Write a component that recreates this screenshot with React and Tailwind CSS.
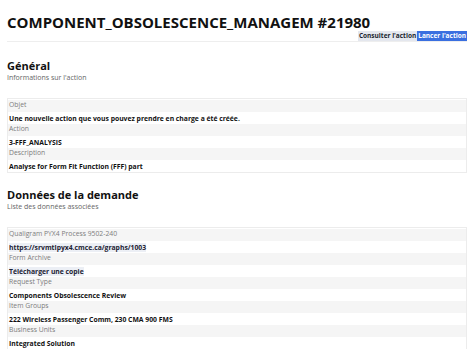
import React from 'react';

const general = [
  { label: 'Objet', value: 'Une nouvelle action que vous pouvez prendre en charge a été créée.' },
  { label: 'Action', value: '3-FFF_ANALYSIS' },
  { label: 'Description', value: 'Analyse for Form Fit Function (FFF) part' },
];

const requestData = [
  { label: 'Qualigram PYX4 Process 9502-240', value: 'https://srvmtlpyx4.cmce.ca/graphs/1003', link: true },
  { label: 'Form Archive', value: 'Télécharger une copie', link: true },
  { label: 'Request Type', value: 'Components Obsolescence Review' },
  { label: 'Item Groups', value: '222 Wireless Passenger Comm, 230 CMA 900 FMS' },
  { label: 'Business Units', value: 'Integrated Solution' },
];

function Field({ label, value, link }) {
  return (
    <div>
      <div className="bg-[#f5f5f5] pl-[1px] pb-[3px] text-[6.8px] leading-[9px] text-[#7d7d7d]">{label}</div>
      <div className="pl-[1px] pt-[2px] text-[6.8px] leading-[10px] font-bold text-[#111]">
        <span className={link ? 'bg-[#eceff5] text-[#1c2233]' : ''}>{value}</span>
      </div>
    </div>
  );
}

function Section({ title, subtitle, fields }) {
  return (
    <section>
      <h2 className="text-[11px] leading-[14px] font-bold text-[#111]">{title}</h2>
      <p className="text-[7px] leading-[10px] text-[#666]">{subtitle}</p>
      <div className="mt-[15px] border border-[#ececec] pt-[1px]">
        {fields.map((f) => (
          <Field key={f.label} {...f} />
        ))}
      </div>
    </section>
  );
}

export default function App() {
  return (
    <div className="h-[349px] overflow-hidden bg-white px-[7px] font-['Open_Sans','Noto_Sans',sans-serif]">
      <header className="border-b border-[#eeeeee] pt-[14px]">
        <h1 className="text-[15px] leading-[16px] font-bold text-[#111]">
          COMPONENT_OBSOLESCENCE_MANAGEM #21980
        </h1>
        <div className="mt-[1px] flex justify-end">
          <button className="bg-[#e4e7ee] px-[1px] text-[6.5px] leading-[10px] font-bold text-[#1a1f2e]">
            Consulter l'action
          </button>
          <button className="bg-[#3a6fe0] px-[1px] text-[6.5px] leading-[10px] font-bold text-white">
            Lancer l'action
          </button>
        </div>
      </header>
      <main className="pt-[17px]">
        <Section title="Général" subtitle="Informations sur l'action" fields={general} />
        <div className="mt-[15px]">
          <Section title="Données de la demande" subtitle="Liste des données associées" fields={requestData} />
        </div>
      </main>
    </div>
  );
}
